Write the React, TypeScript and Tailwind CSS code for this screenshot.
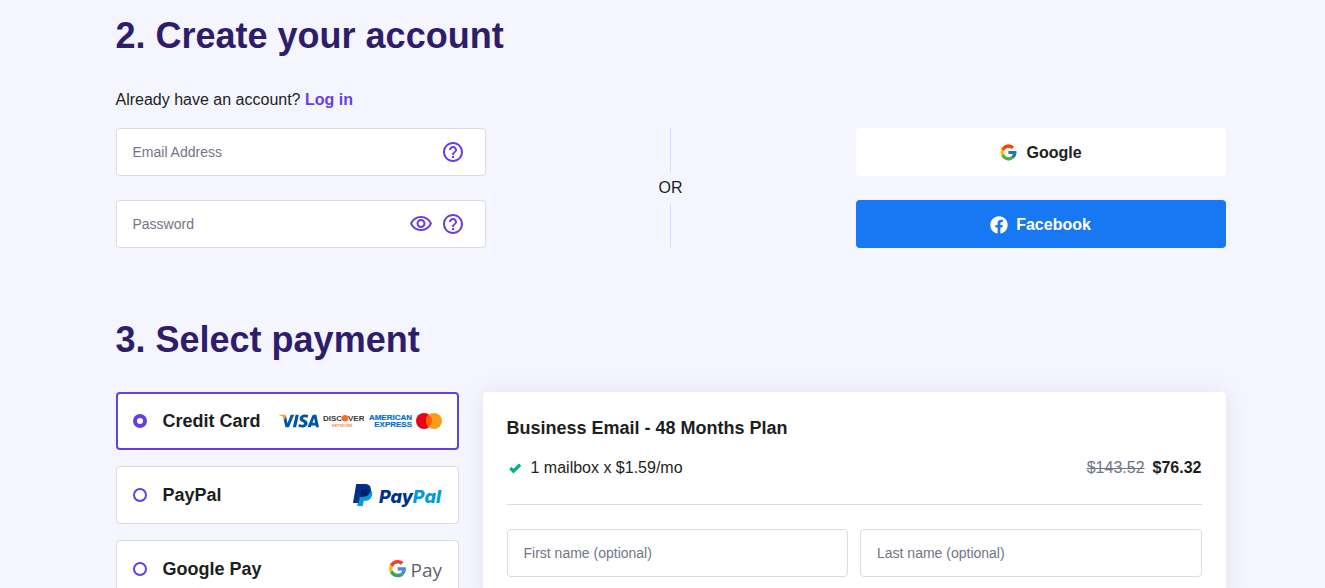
import { useState } from "react";
import type { ReactNode } from "react";
import { FaFacebook } from "react-icons/fa";
import { FcGoogle } from "react-icons/fc";
import { MdHelpOutline, MdOutlineVisibility } from "react-icons/md";
import { SiVisa } from "react-icons/si";

interface FieldProps {
  id: string;
  type?: string;
  label: string;
  children?: ReactNode;
}

function Field({ id, type = "text", label, children }: FieldProps) {
  return (
    <div className="flex h-12 items-center gap-2 rounded border border-[#dadce0] bg-white pl-4 pr-5">
      <input
        id={id}
        type={type}
        aria-label={label}
        placeholder={label}
        className="min-w-0 flex-1 bg-transparent text-sm text-[#1d1e20] outline-none placeholder:text-[#727586]"
      />
      {children}
    </div>
  );
}

function HelpButton({ label }: { label: string }) {
  return (
    <button type="button" aria-label={label} className="text-[#673de6]">
      <MdHelpOutline size={24} />
    </button>
  );
}

function CardLogos() {
  return (
    <div className="flex items-center gap-1">
      <svg width="0" height="0" className="absolute">
        <linearGradient
          id="visa"
          gradientUnits="userSpaceOnUse"
          x1="0"
          y1="8"
          x2="5"
          y2="10.5"
        >
          <stop offset="0.72" stopColor="#f7a23b" />
          <stop offset="0.8" stopColor="#00579f" />
        </linearGradient>
      </svg>
      <SiVisa size={40} fill="url(#visa)" aria-label="Visa" />
      <svg width="41" height="18" viewBox="0 0 41 18">
        <g fontFamily="Liberation Sans, Arial, sans-serif" fontWeight="700">
          <text x="0" y="9" fontSize="8" fill="#3a3a3a">DISC</text>
          <circle cx="22" cy="6.3" r="3.2" fill="#f26e21" />
          <text x="25" y="9" fontSize="8" fill="#3a3a3a">VER</text>
          <text x="9" y="15" fontSize="4" fill="#f58a4b">NETWORK</text>
        </g>
      </svg>
      <svg width="44" height="18" viewBox="0 0 44 18">
        <g
          fontFamily="Liberation Sans, Arial, sans-serif"
          fontWeight="700"
          fontSize="8"
          fill="#016fd0"
          stroke="#016fd0"
          strokeWidth="0.2"
          textAnchor="end"
        >
          <text x="44" y="8">AMERICAN</text>
          <text x="44" y="15">EXPRESS</text>
        </g>
      </svg>
      <svg width="26" height="16" viewBox="0 0 26 16">
        <circle cx="8" cy="8" r="8" fill="#eb001b" />
        <circle cx="18" cy="8" r="8" fill="#f79e1b" />
        <path d="M13 1.76a8 8 0 0 1 0 12.48 8 8 0 0 1 0-12.48z" fill="#ff5f00" />
      </svg>
    </div>
  );
}

function PayPalLogo() {
  return (
    <svg width="90" height="24" viewBox="0 0 90 24">
      <path
        d="M5.5 6h11.2c3.1 1.1 4.1 3.4 3.3 6.6-.9 3.7-3.5 5.2-7 5.2h-1.2l-1 5.2H5.2l.7-4z"
        fill="#009cde"
      />
      <path
        d="M4.2 1h8.6c4.3 0 6.7 2.3 5.9 6.3-.8 4.4-3.8 6.4-8 6.4H7.8L6.7 20H1z"
        fill="#003087"
      />
      <path
        d="M9.1 6.4h7.6c.8 0 1.4.1 2 .4-.7 4.8-3.8 6.9-8 6.9H7.8z"
        fill="#012169"
      />
      <text
        x="89"
        y="20"
        textAnchor="end"
        fontFamily="Inter, sans-serif"
        fontWeight="800"
        fontStyle="italic"
        fontSize="18"
        fill="#003087"
      >
        Pay<tspan fill="#009cde">Pal</tspan>
      </text>
    </svg>
  );
}

function GooglePayLogo() {
  return (
    <svg width="54" height="26" viewBox="0 0 54 26">
      <g transform="translate(1 4) scale(0.36)">
        <path fill="#ea4335" d="M24 9.5c3.54 0 6.71 1.22 9.21 3.6l6.85-6.85C35.9 2.38 30.47 0 24 0 14.62 0 6.51 5.38 2.56 13.22l7.98 6.19C12.43 13.72 17.74 9.5 24 9.5z" />
        <path fill="#4285f4" d="M46.98 24.55c0-1.57-.15-3.09-.38-4.55H24v9.02h12.94c-.58 2.96-2.26 5.48-4.78 7.18l7.73 6c4.51-4.18 7.09-10.36 7.09-17.65z" />
        <path fill="#fbbc05" d="M10.53 28.59c-.48-1.45-.76-2.99-.76-4.59s.27-3.14.76-4.59l-7.98-6.19C.92 16.46 0 20.12 0 24c0 3.88.92 7.54 2.56 10.78l7.97-6.19z" />
        <path fill="#34a853" d="M24 48c6.48 0 11.93-2.13 15.89-5.81l-7.73-6c-2.15 1.45-4.92 2.3-8.16 2.3-6.26 0-11.57-4.22-13.47-9.91l-7.98 6.19C6.51 42.62 14.62 48 24 48z" />
      </g>
      <text
        x="54"
        y="21"
        textAnchor="end"
        fontFamily="Open Sans, sans-serif"
        fontSize="19"
        fill="#5f6368"
      >
        Pay
      </text>
    </svg>
  );
}

const methods = [
  { id: "card", label: "Credit Card", logo: <CardLogos /> },
  { id: "paypal", label: "PayPal", logo: <PayPalLogo /> },
  { id: "gpay", label: "Google Pay", logo: <GooglePayLogo /> },
];

export default function App() {
  const [method, setMethod] = useState("card");

  return (
    <main className="min-h-screen bg-[#f4f5ff] pb-12 pl-4 pt-3 font-['Liberation_Sans',Arial,sans-serif] text-base text-[#1d1e20]">
      <div className="mx-auto max-w-[1110px]">
        <section>
          <h2 className="text-4xl/12 font-bold text-[#2f1c6a]">2. Create your account</h2>
          <p className="mt-7">
            Already have an account?{" "}
            <a href="#login" className="font-bold text-[#673de6]">
              Log in
            </a>
          </p>
          <div className="mt-4 grid grid-cols-3">
            <form className="flex flex-col gap-6">
              <Field id="email" type="email" label="Email Address">
                <HelpButton label="Email help" />
              </Field>
              <Field id="password" type="password" label="Password">
                <button type="button" aria-label="Show password" className="text-[#673de6]">
                  <MdOutlineVisibility size={24} />
                </button>
                <HelpButton label="Password help" />
              </Field>
            </form>
            <div className="flex flex-col items-center">
              <div className="w-px flex-1 bg-[#d5dfff]" />
              <span className="leading-8">OR</span>
              <div className="w-px flex-1 bg-[#d5dfff]" />
            </div>
            <div className="flex flex-col gap-6">
              <button
                type="button"
                className="flex h-12 items-center justify-center gap-2 rounded bg-white pt-px font-bold"
              >
                <FcGoogle size={19} />
                Google
              </button>
              <button
                type="button"
                className="flex h-12 items-center justify-center gap-2 rounded bg-[#1877f2] pt-px font-bold text-white"
              >
                <FaFacebook size={18} />
                Facebook
              </button>
            </div>
          </div>
        </section>

        <section className="mt-[68px]">
          <h2 className="text-4xl/12 font-bold text-[#2f1c6a]">3. Select payment</h2>
          <div className="mt-7 grid grid-cols-[343fr_743fr] gap-6">
            <div className="flex flex-col gap-4">
              {methods.map(({ id, label, logo }) => (
                <label
                  key={id}
                  className={`flex h-[58px] items-center rounded bg-white ${
                    method === id
                      ? "border-2 border-[#673de6] px-[15px]"
                      : "border border-[#dadce0] px-4"
                  }`}
                >
                  <input
                    type="radio"
                    name="method"
                    checked={method === id}
                    onChange={() => setMethod(id)}
                    className="size-[14px] appearance-none rounded-full border-2 border-[#673de6] checked:border-4"
                  />
                  <span className="ml-4 text-lg font-bold">{label}</span>
                  <span className="ml-auto">{logo}</span>
                </label>
              ))}
            </div>

            <div className="rounded bg-white p-6 shadow-[0_0_24px_rgba(47,28,106,0.08)]">
              <h3 className="text-lg/6 font-bold">Business Email - 48 Months Plan</h3>
              <div className="mt-4 flex items-center">
                <svg width="16" height="16" viewBox="0 0 16 16" fill="none" aria-hidden="true">
                  <path d="M3.3 8l3.2 3.2 6.6-6.6" stroke="#00b090" strokeWidth="3.2" />
                </svg>
                <span className="ml-2">1 mailbox x $1.59/mo</span>
                <del className="ml-auto text-[#727586]">$143.52</del>
                <strong className="ml-2">$76.32</strong>
              </div>
              <hr className="mt-6 border-[#dadce0]" />
              <div className="mt-6 grid grid-cols-2 gap-3">
                <Field id="first-name" label="First name (optional)" />
                <Field id="last-name" label="Last name (optional)" />
              </div>
            </div>
          </div>
        </section>
      </div>
    </main>
  );
}
